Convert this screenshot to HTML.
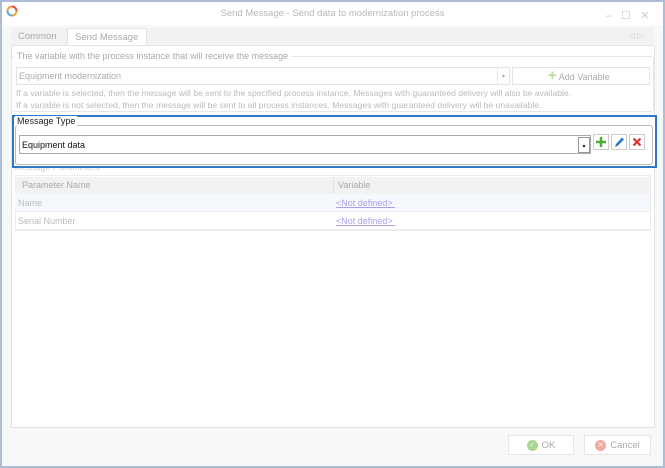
<!DOCTYPE html>
<html><head><style>
*{box-sizing:border-box;margin:0;padding:0}
body{width:665px;height:468px;position:relative;font-family:"Liberation Sans",sans-serif;font-size:9px;color:#bbb;background:#aebdd6;overflow:hidden}
.a{position:absolute}
.btn{display:flex;align-items:center;justify-content:center;gap:4px}
</style></head><body>
<div class="a" style="left:2px;top:2px;width:661px;height:464px;background:#f7f8fa"></div>
<div class="a" style="left:2px;top:2px;width:661px;height:23px;background:#fff"></div>
<svg class="a" style="left:6px;top:5px" width="12" height="12"><circle cx="6" cy="6" r="4.5" fill="none" stroke="#f0a040" stroke-width="2"/><path d="M6 1.5 A4.5 4.5 0 0 1 10.5 6" stroke="#e05050" stroke-width="2" fill="none"/><path d="M1.5 6 A4.5 4.5 0 0 0 6 10.5" stroke="#50b0e0" stroke-width="2" fill="none"/></svg>
<div class="a" style="left:0;width:665px;top:8px;text-align:center;color:#b8b8b8;font-size:9.5px">Send Message - Send data to modernization process</div>
<div class="a" style="left:606px;top:9px;color:#ccc;font-size:11px;word-spacing:6px">– ☐ ✕</div>
<div class="a" style="left:11px;top:28px;width:643px;height:18px;background:#f1f2f4"></div>
<div class="a" style="left:18px;top:31px;font-size:9.5px;color:#aaa">Common</div>
<div class="a" style="left:67px;top:28px;width:80px;height:18px;background:#fff;border:1px solid #e3e3e3;border-bottom:none;padding:3px 7px;font-size:9.5px;color:#aaa">Send Message</div>
<div class="a" style="left:629px;top:31px;color:#ccc;font-size:8px">◁ ▷</div>
<div class="a" style="left:11px;top:45px;width:644px;height:383px;background:#fff;border:1px solid #e4e4e4"></div>
<div class="a" style="left:11px;top:56px;width:643px;height:56px;border:1px solid #e6e6e6;border-radius:3px"></div>
<div class="a" style="left:14px;top:51px;background:#fff;padding:0 3px;color:#aaa">The variable with the process instance that will receive the message</div>
<div class="a" style="left:16px;top:67px;width:494px;height:18px;border:1px solid #e4e4e4;padding:3px 2px;color:#aaa">Equipment modernization</div>
<div class="a" style="left:497px;top:68px;width:12px;height:16px;border-left:1px solid #e4e4e4;color:#aaa;font-size:6px;text-align:center;padding-top:5px">▾</div>
<div class="a" style="left:512px;top:67px;width:138px;height:18px;border:1px solid #e4e4e4;padding:3px 0 0 35px;color:#aaa"><span style="color:#b3dd99;font-size:15px;font-weight:bold;line-height:9px">+</span> Add Variable</div>
<div class="a" style="left:16px;top:88px;color:#bbb;font-size:8.6px">If a variable is selected, then the message will be sent to the specified process instance. Messages with guaranteed delivery will also be available.</div>
<div class="a" style="left:16px;top:100px;color:#bbb;font-size:8.6px">If a variable is not selected, then the message will be sent to all process instances. Messages with guaranteed delivery will be unavailable.</div>
<div class="a" style="left:15px;top:175px;width:636px;height:56px;border:1px solid #eee"></div>
<div class="a" style="left:15px;top:177px;width:635px;height:17px;background:#f2f2f2;padding:3px 7px;color:#aaa">Parameter Name</div>
<div class="a" style="left:333px;top:177px;width:1px;height:17px;background:#e0e0e0"></div>
<div class="a" style="left:338px;top:180px;color:#aaa">Variable</div>
<div class="a" style="left:15px;top:194px;width:635px;height:18px;background:#f5f8fc;border-bottom:1px solid #eee;padding:4px 3px;color:#bbb">Name</div>
<div class="a" style="left:15px;top:212px;width:635px;height:18px;border-bottom:1px solid #eee;padding:4px 3px;color:#bbb">Serial Number</div>
<div class="a" style="left:336px;top:198px;color:#aaa0e8;text-decoration:underline">&lt;Not defined&gt;&nbsp;</div>
<div class="a" style="left:336px;top:216px;color:#aaa0e8;text-decoration:underline">&lt;Not defined&gt;&nbsp;</div>
<div class="a" style="left:14px;top:162px;color:#ccc">Message Parameters</div>
<div class="a" style="left:12px;top:115px;width:645px;height:53px;border:2px solid #2c78c4;background:#fff"></div>
<div class="a" style="left:15px;top:125px;width:638px;height:40px;border:1px solid #bbb;border-radius:3px"></div>
<div class="a" style="left:15px;top:116px;background:#fff;padding:0 2px;color:#222">Message Type</div>
<div class="a" style="left:19px;top:135px;width:572px;height:19px;border:1px solid #aaa;padding:4px 2px;color:#111">Equipment data</div>
<div class="a" style="left:578px;top:137px;width:12px;height:16px;border:1px solid #999;font-size:6px;text-align:center;padding-top:5px;color:#222">▾</div>
<div class="a" style="left:593px;top:134px;width:16px;height:16px;border:1px solid #ccc;background:#fff"></div>
<svg class="a" style="left:594px;top:135px" width="14" height="14"><path d="M7 2V12M2 7H12" stroke="#4caf30" stroke-width="2.5"/></svg>
<div class="a" style="left:611px;top:134px;width:16px;height:16px;border:1px solid #ccc"></div>
<svg class="a" style="left:612px;top:135px" width="14" height="14"><path d="M3 12L4 9L10 2.5L12 4.5L5.5 11Z" fill="#2a78d0"/></svg>
<div class="a" style="left:629px;top:134px;width:16px;height:16px;border:1px solid #ccc"></div>
<svg class="a" style="left:630px;top:135px" width="14" height="14"><path d="M3.5 3.5L10.5 10.5M10.5 3.5L3.5 10.5" stroke="#e03030" stroke-width="2.2"/></svg>
<div class="a btn" style="left:508px;top:435px;width:66px;height:20px;border:1px solid #e6e6e6;background:#fff;color:#aaa;font-size:9.5px"><span style="display:inline-block;width:11px;height:11px;border-radius:50%;background:#a8d890;color:#fff;font-size:7px;text-align:center;line-height:11px">✓</span>OK</div>
<div class="a btn" style="left:584px;top:435px;width:67px;height:20px;border:1px solid #e6e6e6;background:#fff;color:#aaa;font-size:9.5px"><span style="display:inline-block;width:11px;height:11px;border-radius:50%;background:#f2a8a0;color:#fff;font-size:7px;text-align:center;line-height:11px">✕</span>Cancel</div>
</body></html>
